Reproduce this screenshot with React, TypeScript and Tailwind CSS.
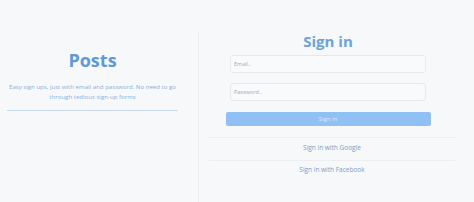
export default function App() {
  return (
    <div
      className="flex h-[202px] w-[474px] bg-[#f7f8f9] text-[#5a9ad8]"
      style={{ fontFamily: '"Open Sans", "Noto Sans", sans-serif' }}
    >
      <section className="w-[198px] shrink-0 pl-[7px] pr-[20px] pt-[48px]">
        <h1 className="text-center text-[18px] font-bold leading-[24px] text-[#5d9ad9]">Posts</h1>
        <p className="mt-[10px] px-[2px] text-center text-[6.1px] leading-[10px] text-[#8ab0dc]">
          Easy sign ups, just with email and password. No need to go through tedious sign-up forms
        </p>
        <div className="mt-[8px] h-px bg-[#c9daf0]" />
      </section>

      <section className="mt-[32px] flex-1 border-l border-[#eceef1] pl-[10px] pr-[19px]">
        <div className="pr-[8px]">
          <h2 className="mt-[-1px] text-center text-[15px] font-bold leading-[20px] text-[#6aa2dc]">Sign in</h2>
          <div className="mt-[4px] flex flex-col items-center gap-[10px]">
            <input
              placeholder="Email.."
              className="h-[18px] w-[196px] rounded-[3px] border border-[#e6e8eb] bg-[#f9fafb] px-[3px] text-[5.5px] outline-none placeholder:text-[#a6a9ad]"
            />
            <input
              placeholder="Password.."
              className="h-[18px] w-[196px] rounded-[3px] border border-[#e6e8eb] bg-[#f9fafb] px-[3px] text-[5.5px] outline-none placeholder:text-[#a6a9ad]"
            />
          </div>
          <div className="mt-[11px] flex justify-center">
            <button className="h-[14px] w-[205px] rounded-[2px] bg-[#91c0f4] text-[6px] leading-[14px] text-[#dbe9fb]">
              Sign in
            </button>
          </div>
        </div>
        <div className="mt-[11px] border-t border-[#eceef0] pt-[3px] text-center text-[6.5px] leading-[14px] text-[#7c9cc6]">
          Sign in with Google
        </div>
        <div className="mt-[5px] border-t border-[#eceef0] pt-[2px] text-center text-[6.5px] leading-[14px] text-[#7c9cc6]">
          Sign in with Facebook
        </div>
      </section>
    </div>
  );
}
